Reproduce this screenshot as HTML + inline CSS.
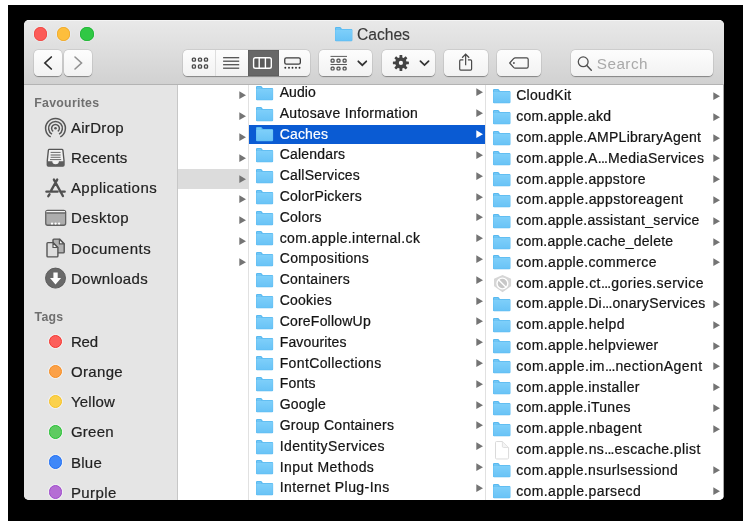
<!DOCTYPE html>
<html><head><meta charset="utf-8"><title>Caches</title>
<style>
html,body{margin:0;padding:0;background:#fff;}
body{width:750px;height:525px;position:relative;overflow:hidden;font-family:"Liberation Sans",sans-serif;font-size:14px;color:#1e1e1e;}
.bg{position:absolute;left:8px;top:5px;width:735px;height:516px;background:#000;}
.win{position:absolute;left:24px;top:20px;width:700px;height:480px;border-radius:5px;overflow:hidden;background:#fff;}
.pg{position:absolute;left:-24px;top:-20px;width:750px;height:525px;will-change:transform;}
.abs{position:absolute;}
.tb{position:absolute;left:24px;top:20px;width:700px;height:64px;background:linear-gradient(#e9e9e9,#d1d1d1);border-bottom:1px solid #b3b3b3;box-shadow:inset 0 1px 0 #f4f4f4;}
.tl{position:absolute;width:13.6px;height:13.6px;border-radius:50%;top:27px;}
.btn{position:absolute;top:49.7px;height:26px;background:linear-gradient(#fdfdfd,#f2f2f2);border-radius:4.5px;box-shadow:0 0.5px 1px rgba(0,0,0,.35),0 0 0 0.5px rgba(0,0,0,.08);}
.side{position:absolute;left:24px;top:85px;width:153px;height:415px;background:#e5e5e5;border-right:1px solid #c7c7c7;}
.sh{position:absolute;left:35px;font-size:12.3px;font-weight:bold;color:#6f6f6f;white-space:nowrap;line-height:14px;}
.si{position:absolute;left:70.9px;font-size:15px;color:#222;white-space:nowrap;line-height:18px;-webkit-text-stroke:0.2px #222;}
.dot{position:absolute;left:48.7px;width:11.8px;height:11.8px;border-radius:50%;border:1px solid;box-shadow:0 0 0 0.9px rgba(255,255,255,.5);}
.c0{position:absolute;left:178px;top:85px;width:70px;height:415px;background:#fff;border-right:1px solid #e1e1e1;}
.c1{position:absolute;left:249px;top:85px;width:236px;height:415px;background:#fff;border-right:1px solid #e1e1e1;}
.c2{position:absolute;left:486px;top:85px;width:237px;height:415px;background:#fff;border-right:1px solid #a9a9a9;}
.lbl{position:absolute;white-space:nowrap;font-size:14px;line-height:16px;color:#141414;-webkit-text-stroke:0.22px #141414;}
.fi,.ar,.ic{position:absolute;overflow:visible;}
</style></head><body>
<div class="bg"></div>
<div class="win"><div class="pg">
<div class="tb"></div>
<div class="tl" style="left:33.9px;background:#fc5b57;box-shadow:inset 0 0 0 0.8px #ee4a45,0 0 0 0.8px rgba(235,245,245,.7);"></div>
<div class="tl" style="left:56.8px;background:#fdbe3c;box-shadow:inset 0 0 0 0.8px #eea92e,0 0 0 0.8px rgba(235,240,248,.7);"></div>
<div class="tl" style="left:80.1px;background:#30c844;box-shadow:inset 0 0 0 0.8px #20b536,0 0 0 0.8px rgba(245,235,245,.7);"></div>
<div class="abs" style="left:356.9px;top:26px;font-size:15.65px;line-height:18px;color:#383838;white-space:nowrap;-webkit-text-stroke:0.15px #383838;">Caches</div>
<div class="btn" style="left:33.8px;width:28.4px;"></div>
<div class="btn" style="left:64px;width:28.4px;"></div>
<div class="btn" style="left:183.1px;width:126.7px;"></div>
<div class="abs" style="left:215px;top:49.7px;width:1px;height:26px;background:#dedede"></div>
<div class="abs" style="left:247.6px;top:49.7px;width:31px;height:26.3px;background:#676767;box-shadow:inset 0 0 0 0.5px #595959"></div>
<div class="btn" style="left:319.1px;width:53px;"></div>
<div class="btn" style="left:381.6px;width:53px;"></div>
<div class="btn" style="left:443.9px;width:43.7px;"></div>
<div class="btn" style="left:497.1px;width:43.9px;"></div>
<div class="btn" style="left:570.9px;width:142.6px;"></div>
<div class="abs" style="left:596.8px;top:55px;font-size:15.3px;line-height:18px;color:#a9a9a9;letter-spacing:0.45px;">Search</div>
<div class="side"></div>
<div class="c0"></div>
<div class="c1"></div>
<div class="c2"></div>

<svg class="ic" style="left:30.00px;top:46.00px" width="66" height="34" viewBox="0 0 66 34"><path d="M21.3 11.0 L14.9 17 L21.3 23.0" fill="none" stroke="#2d2d2d" stroke-width="1.7" stroke-linecap="round" stroke-linejoin="miter"/><path d="M45.0 11.0 L51.5 17 L45.0 23.0" fill="none" stroke="#919191" stroke-width="1.6" stroke-linecap="round" stroke-linejoin="miter"/></svg>
<svg class="ic" style="left:182.00px;top:46.00px" width="66" height="34" viewBox="0 0 66 34"><rect x="10.35" y="12.05" width="3.1" height="3.1" rx="0.9" fill="#ebebeb" stroke="#4a4a4a" stroke-width="1.3"/><rect x="10.35" y="18.95" width="3.1" height="3.1" rx="0.9" fill="#ebebeb" stroke="#4a4a4a" stroke-width="1.3"/><rect x="16.45" y="12.05" width="3.1" height="3.1" rx="0.9" fill="#ebebeb" stroke="#4a4a4a" stroke-width="1.3"/><rect x="16.45" y="18.95" width="3.1" height="3.1" rx="0.9" fill="#ebebeb" stroke="#4a4a4a" stroke-width="1.3"/><rect x="22.45" y="12.05" width="3.1" height="3.1" rx="0.9" fill="#ebebeb" stroke="#4a4a4a" stroke-width="1.3"/><rect x="22.45" y="18.95" width="3.1" height="3.1" rx="0.9" fill="#ebebeb" stroke="#4a4a4a" stroke-width="1.3"/><path d="M41.10 11.70 H57.20" stroke="#4a4a4a" stroke-width="1.25"/><path d="M41.10 15.20 H57.20" stroke="#4a4a4a" stroke-width="1.25"/><path d="M41.10 18.70 H57.20" stroke="#4a4a4a" stroke-width="1.25"/><path d="M41.10 22.20 H57.20" stroke="#4a4a4a" stroke-width="1.25"/></svg>
<svg class="ic" style="left:246.00px;top:46.00px" width="66" height="34" viewBox="0 0 66 34"><rect x="7.60" y="11.70" width="17.70" height="10.50" rx="1.8" fill="#5a5a5a" stroke="#fff" stroke-width="1.4"/><path d="M13.20 11.50 V22.50" stroke="#fff" stroke-width="1.4"/><path d="M19.40 11.50 V22.50" stroke="#fff" stroke-width="1.4"/><rect x="38.75" y="11.95" width="15.60" height="6.10" rx="1.6" fill="#f3f3f3" stroke="#3c3c3c" stroke-width="1.3"/><circle cx="39.30" cy="21.70" r="0.95" fill="#2e2e2e"/><circle cx="43.00" cy="21.70" r="0.95" fill="#2e2e2e"/><circle cx="46.50" cy="21.70" r="0.95" fill="#2e2e2e"/><circle cx="50.00" cy="21.70" r="0.95" fill="#2e2e2e"/><circle cx="53.50" cy="21.70" r="0.95" fill="#2e2e2e"/></svg>
<svg class="ic" style="left:316.00px;top:46.00px" width="66" height="34" viewBox="0 0 66 34"><path d="M14.50 10.40 H31.00" stroke="#4a4a4a" stroke-width="0.9"/><path d="M14.50 18.50 H31.00" stroke="#4a4a4a" stroke-width="0.9"/><rect x="15.10" y="13.20" width="3.0" height="2.9" rx="0.9" fill="#ebebeb" stroke="#4a4a4a" stroke-width="1.2"/><rect x="15.10" y="21.10" width="3.0" height="2.9" rx="0.9" fill="#ebebeb" stroke="#4a4a4a" stroke-width="1.2"/><rect x="21.00" y="13.20" width="3.0" height="2.9" rx="0.9" fill="#ebebeb" stroke="#4a4a4a" stroke-width="1.2"/><rect x="21.00" y="21.10" width="3.0" height="2.9" rx="0.9" fill="#ebebeb" stroke="#4a4a4a" stroke-width="1.2"/><rect x="27.10" y="13.20" width="3.0" height="2.9" rx="0.9" fill="#ebebeb" stroke="#4a4a4a" stroke-width="1.2"/><rect x="27.10" y="21.10" width="3.0" height="2.9" rx="0.9" fill="#ebebeb" stroke="#4a4a4a" stroke-width="1.2"/><path d="M42.30 15.30 L46.30 19.20 L50.30 15.30" fill="none" stroke="#333" stroke-width="1.75" stroke-linecap="round" stroke-linejoin="miter"/></svg>
<svg class="ic" style="left:380.00px;top:46.00px" width="66" height="34" viewBox="0 0 66 34"><rect x="19.50" y="8.90" width="2.8" height="4" rx="0.5" fill="#434343" transform="rotate(0 20.90 16.90)"/><rect x="19.50" y="8.90" width="2.8" height="4" rx="0.5" fill="#434343" transform="rotate(45 20.90 16.90)"/><rect x="19.50" y="8.90" width="2.8" height="4" rx="0.5" fill="#434343" transform="rotate(90 20.90 16.90)"/><rect x="19.50" y="8.90" width="2.8" height="4" rx="0.5" fill="#434343" transform="rotate(135 20.90 16.90)"/><rect x="19.50" y="8.90" width="2.8" height="4" rx="0.5" fill="#434343" transform="rotate(180 20.90 16.90)"/><rect x="19.50" y="8.90" width="2.8" height="4" rx="0.5" fill="#434343" transform="rotate(225 20.90 16.90)"/><rect x="19.50" y="8.90" width="2.8" height="4" rx="0.5" fill="#434343" transform="rotate(270 20.90 16.90)"/><rect x="19.50" y="8.90" width="2.8" height="4" rx="0.5" fill="#434343" transform="rotate(315 20.90 16.90)"/><circle cx="20.90" cy="16.90" r="3.9" fill="none" stroke="#434343" stroke-width="3.6"/><path d="M40.40 15.20 L44.50 19.10 L48.60 15.20" fill="none" stroke="#333" stroke-width="1.75" stroke-linecap="round" stroke-linejoin="miter"/></svg>
<svg class="ic" style="left:440.00px;top:46.00px" width="106" height="34" viewBox="0 0 106 34"><path d="M23.40 13.90 H20.70 Q19.70 13.90 19.70 14.90 V23.10 Q19.70 24.10 20.70 24.10 H30.60 Q31.60 24.10 31.60 23.10 V14.90 Q31.60 13.90 30.60 13.90 H27.90" fill="none" stroke="#4a4a4a" stroke-width="1.2"/><path d="M25.65 19.20 V8.40 M22.10 11.70 L25.65 8.20 L29.20 11.70" fill="none" stroke="#4a4a4a" stroke-width="1.2" stroke-linejoin="miter"/><path d="M69.70 17.00 L73.60 12.60 Q74.30 11.90 75.30 11.90 H86.60 Q88.20 11.90 88.20 13.50 V20.50 Q88.20 22.10 86.60 22.10 H75.30 Q74.30 22.10 73.60 21.40 Z" fill="none" stroke="#4a4a4a" stroke-width="1.2" stroke-linejoin="round"/><circle cx="73.90" cy="17.00" r="0.9" fill="#4a4a4a"/></svg>
<svg class="ic" style="left:570.00px;top:46.00px" width="30" height="34" viewBox="0 0 30 34"><circle cx="13.20" cy="15.80" r="4.9" fill="none" stroke="#515151" stroke-width="1.3"/><path d="M16.80 19.50 L21.30 24.20" stroke="#515151" stroke-width="1.5" stroke-linecap="round"/></svg>
<svg class="fi" style="left:334.80px;top:27.00px" width="17.4" height="14.4" viewBox="0 0 17.4 14.4"><g transform="scale(1.0 0.988)"><defs><linearGradient id="gt" x1="0" y1="0" x2="0" y2="1"><stop offset="0" stop-color="#7ecffa"/><stop offset="1" stop-color="#69c3f6"/></linearGradient></defs><path d="M0 1.1 Q0 0 1.1 0 L5 0 Q5.6 0 6.1 0.7 L6.9 2 L16.3 2 Q17.4 2 17.4 3.1 L17.4 13.3 Q17.4 14.4 16.3 14.4 L1.1 14.4 Q0 14.4 0 13.3 Z" fill="#58b9f0"/><path d="M0.35 3.6 Q0.35 2.9 1.1 2.9 L16.3 2.9 Q17.05 2.9 17.05 3.6 L17.05 13.2 Q17.05 13.9 16.3 13.9 L1.1 13.9 Q0.35 13.9 0.35 13.2 Z" fill="url(#gt)"/><rect x="0.8" y="1.5" width="4.6" height="0.9" rx="0.4" fill="#9adbfb" opacity="0.8"/></g></svg>
<div class="sh" style="top:95.6px;left:34.3px;letter-spacing:0.28px">Favourites</div>
<div class="sh" style="top:309.6px;left:34.6px;letter-spacing:0.2px">Tags</div>
<div class="si" style="top:119px;letter-spacing:0.323px">AirDrop</div>
<div class="si" style="top:149px;letter-spacing:0.228px">Recents</div>
<div class="si" style="top:179px;letter-spacing:0.446px">Applications</div>
<div class="si" style="top:209px;letter-spacing:0.461px">Desktop</div>
<div class="si" style="top:240px;letter-spacing:0.491px">Documents</div>
<div class="si" style="top:270px;letter-spacing:0.323px">Downloads</div>
<div class="si" style="top:333px;letter-spacing:-0.166px">Red</div>
<div class="dot" style="top:334.50px;background:#fc5f5b;border-color:#f4332e"></div>
<div class="si" style="top:363px;letter-spacing:0.351px">Orange</div>
<div class="dot" style="top:364.58px;background:#fba149;border-color:#f68c20"></div>
<div class="si" style="top:393px;letter-spacing:0.237px">Yellow</div>
<div class="dot" style="top:394.66px;background:#fbd14c;border-color:#f6c122"></div>
<div class="si" style="top:423px;letter-spacing:0.274px">Green</div>
<div class="dot" style="top:424.74px;background:#5ecb61;border-color:#22c030"></div>
<div class="si" style="top:454px;letter-spacing:0.323px">Blue</div>
<div class="dot" style="top:454.82px;background:#4088f8;border-color:#1c6df5"></div>
<div class="si" style="top:484px;letter-spacing:0.408px">Purple</div>
<div class="dot" style="top:484.90px;background:#b56dd4;border-color:#9d47cb"></div>
<svg class="ic" style="left:40.00px;top:112.00px" width="32" height="30" viewBox="0 0 32 30"><path d="M10.70 24.96 A9.9 9.9 0 1 1 20.30 24.96" fill="none" stroke="#555" stroke-width="1.5"/><path d="M11.95 22.21 A6.9 6.9 0 1 1 19.05 22.21" fill="none" stroke="#555" stroke-width="1.5"/><path d="M13.21 19.46 A3.9 3.9 0 1 1 17.79 19.46" fill="none" stroke="#555" stroke-width="1.5"/><circle cx="15.5" cy="16.30000000000001" r="1.3" fill="#555"/></svg>
<svg class="ic" style="left:40.00px;top:143.00px" width="32" height="30" viewBox="0 0 32 30"><path d="M9.30 6.30 H21.90 Q22.70 6.30 22.90 7.10 L24.00 17.50 V22.00 Q24.00 23.10 22.90 23.10 H8.40 Q7.30 23.10 7.30 22.00 V17.50 L8.40 7.10 Q8.60 6.30 9.30 6.30 Z" fill="#f2f2f2" stroke="#555" stroke-width="1.35" stroke-linejoin="round"/><path d="M7.30 18.30 H12.30 A3.3 3.0 0 0 0 18.90 18.30 H24.00 V22.20 Q24.00 23.10 23.00 23.10 H8.30 Q7.30 23.10 7.30 22.20 Z" fill="#5e5e5e"/><path d="M10.60 9.40 H20.60" stroke="#6a6a6a" stroke-width="1.0"/><path d="M10.60 12.00 H20.60" stroke="#8a8a8a" stroke-width="1.5"/><path d="M10.60 14.30 H20.60" stroke="#6a6a6a" stroke-width="1.0"/><path d="M10.00 16.60 H21.20" stroke="#6a6a6a" stroke-width="1.0"/></svg>
<svg class="ic" style="left:40.00px;top:173.00px" width="32" height="30" viewBox="0 0 32 30"><path d="M6.40 18.60 H17.60 M20.20 18.60 H24.70 M17.20 6.60 L11.20 17.40 M9.50 21.30 L8.30 23.20 M13.90 6.60 L22.90 23.00" fill="none" stroke="#505050" stroke-width="2.35" stroke-linecap="round"/></svg>
<svg class="ic" style="left:40.00px;top:203.00px" width="32" height="30" viewBox="0 0 32 30"><rect x="5.75" y="7.35" width="19.90" height="14.90" rx="2" fill="#adadad" stroke="#616161" stroke-width="1.3"/><rect x="6.40" y="8.00" width="18.6" height="1.2" fill="#f4f4f4"/><rect x="6.40" y="9.20" width="18.6" height="1.7" fill="#777"/><circle cx="12.00" cy="20.60" r="1.15" fill="#fff"/><circle cx="15.60" cy="20.60" r="1.15" fill="#fff"/><circle cx="19.10" cy="20.60" r="1.15" fill="#fff"/></svg>
<svg class="ic" style="left:40.00px;top:233.00px" width="32" height="30" viewBox="0 0 32 30"><path d="M13.00 7.00 Q13.00 6.10 13.90 6.10 H19.60 L24.20 10.70 V19.00 Q24.20 19.90 23.30 19.90 H13.00 Z" fill="#b2b2b2" stroke="#555" stroke-width="1.4" stroke-linejoin="round"/><path d="M19.40 6.40 V10.90 H23.90 Z" fill="#f6f6f6" stroke="#555" stroke-width="1.2" stroke-linejoin="round"/><path d="M7.00 10.50 Q7.00 9.60 7.90 9.60 H13.10 L17.90 14.40 V23.00 Q17.90 23.90 17.00 23.90 H7.90 Q7.00 23.90 7.00 23.00 Z" fill="#dedede" stroke="#555" stroke-width="1.4" stroke-linejoin="round"/><path d="M13.00 9.90 V14.50 H17.60 Z" fill="#f8f8f8" stroke="#555" stroke-width="1.2" stroke-linejoin="round"/></svg>
<svg class="ic" style="left:40.00px;top:263.00px" width="32" height="30" viewBox="0 0 32 30"><circle cx="15.5" cy="15.10" r="10.0" fill="#696969" stroke="#555" stroke-width="0.9"/><path d="M13.40 9.40 H17.70 V15.00 H21.10 L15.50 21.60 L10.00 15.00 H13.40 Z" fill="#fff"/></svg>
<svg class="ar" style="left:239.20px;top:91.30px" width="8" height="8.4" viewBox="0 0 8 8.4"><path d="M0.3 0.3 L7.0 4.2 L0.3 8.1 Z" fill="#747474"/></svg>
<svg class="ar" style="left:239.20px;top:112.13px" width="8" height="8.4" viewBox="0 0 8 8.4"><path d="M0.3 0.3 L7.0 4.2 L0.3 8.1 Z" fill="#747474"/></svg>
<svg class="ar" style="left:239.20px;top:132.96px" width="8" height="8.4" viewBox="0 0 8 8.4"><path d="M0.3 0.3 L7.0 4.2 L0.3 8.1 Z" fill="#747474"/></svg>
<svg class="ar" style="left:239.20px;top:153.79px" width="8" height="8.4" viewBox="0 0 8 8.4"><path d="M0.3 0.3 L7.0 4.2 L0.3 8.1 Z" fill="#747474"/></svg>
<div class="abs" style="left:178px;top:169.42px;width:70.5px;height:19.2px;background:#dcdcdc"></div>
<svg class="ar" style="left:239.20px;top:174.62px" width="8" height="8.4" viewBox="0 0 8 8.4"><path d="M0.3 0.3 L7.0 4.2 L0.3 8.1 Z" fill="#747474"/></svg>
<svg class="ar" style="left:239.20px;top:195.45px" width="8" height="8.4" viewBox="0 0 8 8.4"><path d="M0.3 0.3 L7.0 4.2 L0.3 8.1 Z" fill="#747474"/></svg>
<svg class="ar" style="left:239.20px;top:216.28px" width="8" height="8.4" viewBox="0 0 8 8.4"><path d="M0.3 0.3 L7.0 4.2 L0.3 8.1 Z" fill="#747474"/></svg>
<svg class="ar" style="left:239.20px;top:237.11px" width="8" height="8.4" viewBox="0 0 8 8.4"><path d="M0.3 0.3 L7.0 4.2 L0.3 8.1 Z" fill="#747474"/></svg>
<svg class="ar" style="left:239.20px;top:257.94px" width="8" height="8.4" viewBox="0 0 8 8.4"><path d="M0.3 0.3 L7.0 4.2 L0.3 8.1 Z" fill="#747474"/></svg>
<svg class="fi" style="left:256.45px;top:85.76px" width="17.4" height="14.4" viewBox="0 0 17.4 14.4"><g transform="scale(0.985 0.988)"><defs><linearGradient id="ga0" x1="0" y1="0" x2="0" y2="1"><stop offset="0" stop-color="#7ecffa"/><stop offset="1" stop-color="#69c3f6"/></linearGradient></defs><path d="M0 1.1 Q0 0 1.1 0 L5 0 Q5.6 0 6.1 0.7 L6.9 2 L16.3 2 Q17.4 2 17.4 3.1 L17.4 13.3 Q17.4 14.4 16.3 14.4 L1.1 14.4 Q0 14.4 0 13.3 Z" fill="#58b9f0"/><path d="M0.35 3.6 Q0.35 2.9 1.1 2.9 L16.3 2.9 Q17.05 2.9 17.05 3.6 L17.05 13.2 Q17.05 13.9 16.3 13.9 L1.1 13.9 Q0.35 13.9 0.35 13.2 Z" fill="url(#ga0)"/><rect x="0.8" y="1.5" width="4.6" height="0.9" rx="0.4" fill="#9adbfb" opacity="0.8"/></g></svg>
<div class="lbl" style="left:279.7px;top:84px;letter-spacing:0.072px;">Audio</div>
<svg class="ar" style="left:476.00px;top:88.46px" width="8" height="8.4" viewBox="0 0 8 8.4"><path d="M0.3 0.3 L7.0 4.2 L0.3 8.1 Z" fill="#747474"/></svg>
<svg class="fi" style="left:256.45px;top:106.57px" width="17.4" height="14.4" viewBox="0 0 17.4 14.4"><g transform="scale(0.985 0.988)"><defs><linearGradient id="ga1" x1="0" y1="0" x2="0" y2="1"><stop offset="0" stop-color="#7ecffa"/><stop offset="1" stop-color="#69c3f6"/></linearGradient></defs><path d="M0 1.1 Q0 0 1.1 0 L5 0 Q5.6 0 6.1 0.7 L6.9 2 L16.3 2 Q17.4 2 17.4 3.1 L17.4 13.3 Q17.4 14.4 16.3 14.4 L1.1 14.4 Q0 14.4 0 13.3 Z" fill="#58b9f0"/><path d="M0.35 3.6 Q0.35 2.9 1.1 2.9 L16.3 2.9 Q17.05 2.9 17.05 3.6 L17.05 13.2 Q17.05 13.9 16.3 13.9 L1.1 13.9 Q0.35 13.9 0.35 13.2 Z" fill="url(#ga1)"/><rect x="0.8" y="1.5" width="4.6" height="0.9" rx="0.4" fill="#9adbfb" opacity="0.8"/></g></svg>
<div class="lbl" style="left:279.7px;top:105px;letter-spacing:0.305px;">Autosave Information</div>
<svg class="ar" style="left:476.00px;top:109.27px" width="8" height="8.4" viewBox="0 0 8 8.4"><path d="M0.3 0.3 L7.0 4.2 L0.3 8.1 Z" fill="#747474"/></svg>
<div class="abs" style="left:249px;top:124.8px;width:236px;height:19.2px;background:#0a5bd3"></div>
<svg class="fi" style="left:256.45px;top:127.39px" width="17.4" height="14.4" viewBox="0 0 17.4 14.4"><g transform="scale(0.985 0.988)"><defs><linearGradient id="ga2" x1="0" y1="0" x2="0" y2="1"><stop offset="0" stop-color="#7ecffa"/><stop offset="1" stop-color="#69c3f6"/></linearGradient></defs><path d="M0 1.1 Q0 0 1.1 0 L5 0 Q5.6 0 6.1 0.7 L6.9 2 L16.3 2 Q17.4 2 17.4 3.1 L17.4 13.3 Q17.4 14.4 16.3 14.4 L1.1 14.4 Q0 14.4 0 13.3 Z" fill="#58b9f0"/><path d="M0.35 3.6 Q0.35 2.9 1.1 2.9 L16.3 2.9 Q17.05 2.9 17.05 3.6 L17.05 13.2 Q17.05 13.9 16.3 13.9 L1.1 13.9 Q0.35 13.9 0.35 13.2 Z" fill="url(#ga2)"/><rect x="0.8" y="1.5" width="4.6" height="0.9" rx="0.4" fill="#9adbfb" opacity="0.8"/></g></svg>
<div class="lbl" style="left:279.7px;top:126px;letter-spacing:0.166px;color:#fff;-webkit-text-stroke:0.2px #fff;">Caches</div>
<svg class="ar" style="left:476.00px;top:130.09px" width="8" height="8.4" viewBox="0 0 8 8.4"><path d="M0.3 0.3 L7.0 4.2 L0.3 8.1 Z" fill="#fff"/></svg>
<svg class="fi" style="left:256.45px;top:148.20px" width="17.4" height="14.4" viewBox="0 0 17.4 14.4"><g transform="scale(0.985 0.988)"><defs><linearGradient id="ga3" x1="0" y1="0" x2="0" y2="1"><stop offset="0" stop-color="#7ecffa"/><stop offset="1" stop-color="#69c3f6"/></linearGradient></defs><path d="M0 1.1 Q0 0 1.1 0 L5 0 Q5.6 0 6.1 0.7 L6.9 2 L16.3 2 Q17.4 2 17.4 3.1 L17.4 13.3 Q17.4 14.4 16.3 14.4 L1.1 14.4 Q0 14.4 0 13.3 Z" fill="#58b9f0"/><path d="M0.35 3.6 Q0.35 2.9 1.1 2.9 L16.3 2.9 Q17.05 2.9 17.05 3.6 L17.05 13.2 Q17.05 13.9 16.3 13.9 L1.1 13.9 Q0.35 13.9 0.35 13.2 Z" fill="url(#ga3)"/><rect x="0.8" y="1.5" width="4.6" height="0.9" rx="0.4" fill="#9adbfb" opacity="0.8"/></g></svg>
<div class="lbl" style="left:279.7px;top:146px;letter-spacing:0.184px;">Calendars</div>
<svg class="ar" style="left:476.00px;top:150.90px" width="8" height="8.4" viewBox="0 0 8 8.4"><path d="M0.3 0.3 L7.0 4.2 L0.3 8.1 Z" fill="#747474"/></svg>
<svg class="fi" style="left:256.45px;top:169.01px" width="17.4" height="14.4" viewBox="0 0 17.4 14.4"><g transform="scale(0.985 0.988)"><defs><linearGradient id="ga4" x1="0" y1="0" x2="0" y2="1"><stop offset="0" stop-color="#7ecffa"/><stop offset="1" stop-color="#69c3f6"/></linearGradient></defs><path d="M0 1.1 Q0 0 1.1 0 L5 0 Q5.6 0 6.1 0.7 L6.9 2 L16.3 2 Q17.4 2 17.4 3.1 L17.4 13.3 Q17.4 14.4 16.3 14.4 L1.1 14.4 Q0 14.4 0 13.3 Z" fill="#58b9f0"/><path d="M0.35 3.6 Q0.35 2.9 1.1 2.9 L16.3 2.9 Q17.05 2.9 17.05 3.6 L17.05 13.2 Q17.05 13.9 16.3 13.9 L1.1 13.9 Q0.35 13.9 0.35 13.2 Z" fill="url(#ga4)"/><rect x="0.8" y="1.5" width="4.6" height="0.9" rx="0.4" fill="#9adbfb" opacity="0.8"/></g></svg>
<div class="lbl" style="left:279.7px;top:167px;letter-spacing:0.217px;">CallServices</div>
<svg class="ar" style="left:476.00px;top:171.71px" width="8" height="8.4" viewBox="0 0 8 8.4"><path d="M0.3 0.3 L7.0 4.2 L0.3 8.1 Z" fill="#747474"/></svg>
<svg class="fi" style="left:256.45px;top:189.82px" width="17.4" height="14.4" viewBox="0 0 17.4 14.4"><g transform="scale(0.985 0.988)"><defs><linearGradient id="ga5" x1="0" y1="0" x2="0" y2="1"><stop offset="0" stop-color="#7ecffa"/><stop offset="1" stop-color="#69c3f6"/></linearGradient></defs><path d="M0 1.1 Q0 0 1.1 0 L5 0 Q5.6 0 6.1 0.7 L6.9 2 L16.3 2 Q17.4 2 17.4 3.1 L17.4 13.3 Q17.4 14.4 16.3 14.4 L1.1 14.4 Q0 14.4 0 13.3 Z" fill="#58b9f0"/><path d="M0.35 3.6 Q0.35 2.9 1.1 2.9 L16.3 2.9 Q17.05 2.9 17.05 3.6 L17.05 13.2 Q17.05 13.9 16.3 13.9 L1.1 13.9 Q0.35 13.9 0.35 13.2 Z" fill="url(#ga5)"/><rect x="0.8" y="1.5" width="4.6" height="0.9" rx="0.4" fill="#9adbfb" opacity="0.8"/></g></svg>
<div class="lbl" style="left:279.7px;top:188px;letter-spacing:0.249px;">ColorPickers</div>
<svg class="ar" style="left:476.00px;top:192.52px" width="8" height="8.4" viewBox="0 0 8 8.4"><path d="M0.3 0.3 L7.0 4.2 L0.3 8.1 Z" fill="#747474"/></svg>
<svg class="fi" style="left:256.45px;top:210.64px" width="17.4" height="14.4" viewBox="0 0 17.4 14.4"><g transform="scale(0.985 0.988)"><defs><linearGradient id="ga6" x1="0" y1="0" x2="0" y2="1"><stop offset="0" stop-color="#7ecffa"/><stop offset="1" stop-color="#69c3f6"/></linearGradient></defs><path d="M0 1.1 Q0 0 1.1 0 L5 0 Q5.6 0 6.1 0.7 L6.9 2 L16.3 2 Q17.4 2 17.4 3.1 L17.4 13.3 Q17.4 14.4 16.3 14.4 L1.1 14.4 Q0 14.4 0 13.3 Z" fill="#58b9f0"/><path d="M0.35 3.6 Q0.35 2.9 1.1 2.9 L16.3 2.9 Q17.05 2.9 17.05 3.6 L17.05 13.2 Q17.05 13.9 16.3 13.9 L1.1 13.9 Q0.35 13.9 0.35 13.2 Z" fill="url(#ga6)"/><rect x="0.8" y="1.5" width="4.6" height="0.9" rx="0.4" fill="#9adbfb" opacity="0.8"/></g></svg>
<div class="lbl" style="left:279.7px;top:209px;letter-spacing:0.266px;">Colors</div>
<svg class="ar" style="left:476.00px;top:213.34px" width="8" height="8.4" viewBox="0 0 8 8.4"><path d="M0.3 0.3 L7.0 4.2 L0.3 8.1 Z" fill="#747474"/></svg>
<svg class="fi" style="left:256.45px;top:231.45px" width="17.4" height="14.4" viewBox="0 0 17.4 14.4"><g transform="scale(0.985 0.988)"><defs><linearGradient id="ga7" x1="0" y1="0" x2="0" y2="1"><stop offset="0" stop-color="#7ecffa"/><stop offset="1" stop-color="#69c3f6"/></linearGradient></defs><path d="M0 1.1 Q0 0 1.1 0 L5 0 Q5.6 0 6.1 0.7 L6.9 2 L16.3 2 Q17.4 2 17.4 3.1 L17.4 13.3 Q17.4 14.4 16.3 14.4 L1.1 14.4 Q0 14.4 0 13.3 Z" fill="#58b9f0"/><path d="M0.35 3.6 Q0.35 2.9 1.1 2.9 L16.3 2.9 Q17.05 2.9 17.05 3.6 L17.05 13.2 Q17.05 13.9 16.3 13.9 L1.1 13.9 Q0.35 13.9 0.35 13.2 Z" fill="url(#ga7)"/><rect x="0.8" y="1.5" width="4.6" height="0.9" rx="0.4" fill="#9adbfb" opacity="0.8"/></g></svg>
<div class="lbl" style="left:279.7px;top:230px;letter-spacing:0.395px;">com.apple.internal.ck</div>
<svg class="ar" style="left:476.00px;top:234.15px" width="8" height="8.4" viewBox="0 0 8 8.4"><path d="M0.3 0.3 L7.0 4.2 L0.3 8.1 Z" fill="#747474"/></svg>
<svg class="fi" style="left:256.45px;top:252.26px" width="17.4" height="14.4" viewBox="0 0 17.4 14.4"><g transform="scale(0.985 0.988)"><defs><linearGradient id="ga8" x1="0" y1="0" x2="0" y2="1"><stop offset="0" stop-color="#7ecffa"/><stop offset="1" stop-color="#69c3f6"/></linearGradient></defs><path d="M0 1.1 Q0 0 1.1 0 L5 0 Q5.6 0 6.1 0.7 L6.9 2 L16.3 2 Q17.4 2 17.4 3.1 L17.4 13.3 Q17.4 14.4 16.3 14.4 L1.1 14.4 Q0 14.4 0 13.3 Z" fill="#58b9f0"/><path d="M0.35 3.6 Q0.35 2.9 1.1 2.9 L16.3 2.9 Q17.05 2.9 17.05 3.6 L17.05 13.2 Q17.05 13.9 16.3 13.9 L1.1 13.9 Q0.35 13.9 0.35 13.2 Z" fill="url(#ga8)"/><rect x="0.8" y="1.5" width="4.6" height="0.9" rx="0.4" fill="#9adbfb" opacity="0.8"/></g></svg>
<div class="lbl" style="left:279.7px;top:250px;letter-spacing:0.388px;">Compositions</div>
<svg class="ar" style="left:476.00px;top:254.96px" width="8" height="8.4" viewBox="0 0 8 8.4"><path d="M0.3 0.3 L7.0 4.2 L0.3 8.1 Z" fill="#747474"/></svg>
<svg class="fi" style="left:256.45px;top:273.08px" width="17.4" height="14.4" viewBox="0 0 17.4 14.4"><g transform="scale(0.985 0.988)"><defs><linearGradient id="ga9" x1="0" y1="0" x2="0" y2="1"><stop offset="0" stop-color="#7ecffa"/><stop offset="1" stop-color="#69c3f6"/></linearGradient></defs><path d="M0 1.1 Q0 0 1.1 0 L5 0 Q5.6 0 6.1 0.7 L6.9 2 L16.3 2 Q17.4 2 17.4 3.1 L17.4 13.3 Q17.4 14.4 16.3 14.4 L1.1 14.4 Q0 14.4 0 13.3 Z" fill="#58b9f0"/><path d="M0.35 3.6 Q0.35 2.9 1.1 2.9 L16.3 2.9 Q17.05 2.9 17.05 3.6 L17.05 13.2 Q17.05 13.9 16.3 13.9 L1.1 13.9 Q0.35 13.9 0.35 13.2 Z" fill="url(#ga9)"/><rect x="0.8" y="1.5" width="4.6" height="0.9" rx="0.4" fill="#9adbfb" opacity="0.8"/></g></svg>
<div class="lbl" style="left:279.7px;top:271px;letter-spacing:0.266px;">Containers</div>
<svg class="ar" style="left:476.00px;top:275.78px" width="8" height="8.4" viewBox="0 0 8 8.4"><path d="M0.3 0.3 L7.0 4.2 L0.3 8.1 Z" fill="#747474"/></svg>
<svg class="fi" style="left:256.45px;top:293.89px" width="17.4" height="14.4" viewBox="0 0 17.4 14.4"><g transform="scale(0.985 0.988)"><defs><linearGradient id="ga10" x1="0" y1="0" x2="0" y2="1"><stop offset="0" stop-color="#7ecffa"/><stop offset="1" stop-color="#69c3f6"/></linearGradient></defs><path d="M0 1.1 Q0 0 1.1 0 L5 0 Q5.6 0 6.1 0.7 L6.9 2 L16.3 2 Q17.4 2 17.4 3.1 L17.4 13.3 Q17.4 14.4 16.3 14.4 L1.1 14.4 Q0 14.4 0 13.3 Z" fill="#58b9f0"/><path d="M0.35 3.6 Q0.35 2.9 1.1 2.9 L16.3 2.9 Q17.05 2.9 17.05 3.6 L17.05 13.2 Q17.05 13.9 16.3 13.9 L1.1 13.9 Q0.35 13.9 0.35 13.2 Z" fill="url(#ga10)"/><rect x="0.8" y="1.5" width="4.6" height="0.9" rx="0.4" fill="#9adbfb" opacity="0.8"/></g></svg>
<div class="lbl" style="left:279.7px;top:292px;letter-spacing:0.251px;">Cookies</div>
<svg class="ar" style="left:476.00px;top:296.59px" width="8" height="8.4" viewBox="0 0 8 8.4"><path d="M0.3 0.3 L7.0 4.2 L0.3 8.1 Z" fill="#747474"/></svg>
<svg class="fi" style="left:256.45px;top:314.70px" width="17.4" height="14.4" viewBox="0 0 17.4 14.4"><g transform="scale(0.985 0.988)"><defs><linearGradient id="ga11" x1="0" y1="0" x2="0" y2="1"><stop offset="0" stop-color="#7ecffa"/><stop offset="1" stop-color="#69c3f6"/></linearGradient></defs><path d="M0 1.1 Q0 0 1.1 0 L5 0 Q5.6 0 6.1 0.7 L6.9 2 L16.3 2 Q17.4 2 17.4 3.1 L17.4 13.3 Q17.4 14.4 16.3 14.4 L1.1 14.4 Q0 14.4 0 13.3 Z" fill="#58b9f0"/><path d="M0.35 3.6 Q0.35 2.9 1.1 2.9 L16.3 2.9 Q17.05 2.9 17.05 3.6 L17.05 13.2 Q17.05 13.9 16.3 13.9 L1.1 13.9 Q0.35 13.9 0.35 13.2 Z" fill="url(#ga11)"/><rect x="0.8" y="1.5" width="4.6" height="0.9" rx="0.4" fill="#9adbfb" opacity="0.8"/></g></svg>
<div class="lbl" style="left:279.7px;top:313px;letter-spacing:0.209px;">CoreFollowUp</div>
<svg class="ar" style="left:476.00px;top:317.40px" width="8" height="8.4" viewBox="0 0 8 8.4"><path d="M0.3 0.3 L7.0 4.2 L0.3 8.1 Z" fill="#747474"/></svg>
<svg class="fi" style="left:256.45px;top:335.52px" width="17.4" height="14.4" viewBox="0 0 17.4 14.4"><g transform="scale(0.985 0.988)"><defs><linearGradient id="ga12" x1="0" y1="0" x2="0" y2="1"><stop offset="0" stop-color="#7ecffa"/><stop offset="1" stop-color="#69c3f6"/></linearGradient></defs><path d="M0 1.1 Q0 0 1.1 0 L5 0 Q5.6 0 6.1 0.7 L6.9 2 L16.3 2 Q17.4 2 17.4 3.1 L17.4 13.3 Q17.4 14.4 16.3 14.4 L1.1 14.4 Q0 14.4 0 13.3 Z" fill="#58b9f0"/><path d="M0.35 3.6 Q0.35 2.9 1.1 2.9 L16.3 2.9 Q17.05 2.9 17.05 3.6 L17.05 13.2 Q17.05 13.9 16.3 13.9 L1.1 13.9 Q0.35 13.9 0.35 13.2 Z" fill="url(#ga12)"/><rect x="0.8" y="1.5" width="4.6" height="0.9" rx="0.4" fill="#9adbfb" opacity="0.8"/></g></svg>
<div class="lbl" style="left:279.7px;top:334px;letter-spacing:0.160px;">Favourites</div>
<svg class="ar" style="left:476.00px;top:338.22px" width="8" height="8.4" viewBox="0 0 8 8.4"><path d="M0.3 0.3 L7.0 4.2 L0.3 8.1 Z" fill="#747474"/></svg>
<svg class="fi" style="left:256.45px;top:356.33px" width="17.4" height="14.4" viewBox="0 0 17.4 14.4"><g transform="scale(0.985 0.988)"><defs><linearGradient id="ga13" x1="0" y1="0" x2="0" y2="1"><stop offset="0" stop-color="#7ecffa"/><stop offset="1" stop-color="#69c3f6"/></linearGradient></defs><path d="M0 1.1 Q0 0 1.1 0 L5 0 Q5.6 0 6.1 0.7 L6.9 2 L16.3 2 Q17.4 2 17.4 3.1 L17.4 13.3 Q17.4 14.4 16.3 14.4 L1.1 14.4 Q0 14.4 0 13.3 Z" fill="#58b9f0"/><path d="M0.35 3.6 Q0.35 2.9 1.1 2.9 L16.3 2.9 Q17.05 2.9 17.05 3.6 L17.05 13.2 Q17.05 13.9 16.3 13.9 L1.1 13.9 Q0.35 13.9 0.35 13.2 Z" fill="url(#ga13)"/><rect x="0.8" y="1.5" width="4.6" height="0.9" rx="0.4" fill="#9adbfb" opacity="0.8"/></g></svg>
<div class="lbl" style="left:279.7px;top:355px;letter-spacing:0.364px;">FontCollections</div>
<svg class="ar" style="left:476.00px;top:359.03px" width="8" height="8.4" viewBox="0 0 8 8.4"><path d="M0.3 0.3 L7.0 4.2 L0.3 8.1 Z" fill="#747474"/></svg>
<svg class="fi" style="left:256.45px;top:377.14px" width="17.4" height="14.4" viewBox="0 0 17.4 14.4"><g transform="scale(0.985 0.988)"><defs><linearGradient id="ga14" x1="0" y1="0" x2="0" y2="1"><stop offset="0" stop-color="#7ecffa"/><stop offset="1" stop-color="#69c3f6"/></linearGradient></defs><path d="M0 1.1 Q0 0 1.1 0 L5 0 Q5.6 0 6.1 0.7 L6.9 2 L16.3 2 Q17.4 2 17.4 3.1 L17.4 13.3 Q17.4 14.4 16.3 14.4 L1.1 14.4 Q0 14.4 0 13.3 Z" fill="#58b9f0"/><path d="M0.35 3.6 Q0.35 2.9 1.1 2.9 L16.3 2.9 Q17.05 2.9 17.05 3.6 L17.05 13.2 Q17.05 13.9 16.3 13.9 L1.1 13.9 Q0.35 13.9 0.35 13.2 Z" fill="url(#ga14)"/><rect x="0.8" y="1.5" width="4.6" height="0.9" rx="0.4" fill="#9adbfb" opacity="0.8"/></g></svg>
<div class="lbl" style="left:279.7px;top:375px;letter-spacing:0.196px;">Fonts</div>
<svg class="ar" style="left:476.00px;top:379.84px" width="8" height="8.4" viewBox="0 0 8 8.4"><path d="M0.3 0.3 L7.0 4.2 L0.3 8.1 Z" fill="#747474"/></svg>
<svg class="fi" style="left:256.45px;top:397.95px" width="17.4" height="14.4" viewBox="0 0 17.4 14.4"><g transform="scale(0.985 0.988)"><defs><linearGradient id="ga15" x1="0" y1="0" x2="0" y2="1"><stop offset="0" stop-color="#7ecffa"/><stop offset="1" stop-color="#69c3f6"/></linearGradient></defs><path d="M0 1.1 Q0 0 1.1 0 L5 0 Q5.6 0 6.1 0.7 L6.9 2 L16.3 2 Q17.4 2 17.4 3.1 L17.4 13.3 Q17.4 14.4 16.3 14.4 L1.1 14.4 Q0 14.4 0 13.3 Z" fill="#58b9f0"/><path d="M0.35 3.6 Q0.35 2.9 1.1 2.9 L16.3 2.9 Q17.05 2.9 17.05 3.6 L17.05 13.2 Q17.05 13.9 16.3 13.9 L1.1 13.9 Q0.35 13.9 0.35 13.2 Z" fill="url(#ga15)"/><rect x="0.8" y="1.5" width="4.6" height="0.9" rx="0.4" fill="#9adbfb" opacity="0.8"/></g></svg>
<div class="lbl" style="left:279.7px;top:396px;letter-spacing:0.189px;">Google</div>
<svg class="ar" style="left:476.00px;top:400.65px" width="8" height="8.4" viewBox="0 0 8 8.4"><path d="M0.3 0.3 L7.0 4.2 L0.3 8.1 Z" fill="#747474"/></svg>
<svg class="fi" style="left:256.45px;top:418.77px" width="17.4" height="14.4" viewBox="0 0 17.4 14.4"><g transform="scale(0.985 0.988)"><defs><linearGradient id="ga16" x1="0" y1="0" x2="0" y2="1"><stop offset="0" stop-color="#7ecffa"/><stop offset="1" stop-color="#69c3f6"/></linearGradient></defs><path d="M0 1.1 Q0 0 1.1 0 L5 0 Q5.6 0 6.1 0.7 L6.9 2 L16.3 2 Q17.4 2 17.4 3.1 L17.4 13.3 Q17.4 14.4 16.3 14.4 L1.1 14.4 Q0 14.4 0 13.3 Z" fill="#58b9f0"/><path d="M0.35 3.6 Q0.35 2.9 1.1 2.9 L16.3 2.9 Q17.05 2.9 17.05 3.6 L17.05 13.2 Q17.05 13.9 16.3 13.9 L1.1 13.9 Q0.35 13.9 0.35 13.2 Z" fill="url(#ga16)"/><rect x="0.8" y="1.5" width="4.6" height="0.9" rx="0.4" fill="#9adbfb" opacity="0.8"/></g></svg>
<div class="lbl" style="left:279.7px;top:417px;letter-spacing:0.252px;">Group Containers</div>
<svg class="ar" style="left:476.00px;top:421.47px" width="8" height="8.4" viewBox="0 0 8 8.4"><path d="M0.3 0.3 L7.0 4.2 L0.3 8.1 Z" fill="#747474"/></svg>
<svg class="fi" style="left:256.45px;top:439.58px" width="17.4" height="14.4" viewBox="0 0 17.4 14.4"><g transform="scale(0.985 0.988)"><defs><linearGradient id="ga17" x1="0" y1="0" x2="0" y2="1"><stop offset="0" stop-color="#7ecffa"/><stop offset="1" stop-color="#69c3f6"/></linearGradient></defs><path d="M0 1.1 Q0 0 1.1 0 L5 0 Q5.6 0 6.1 0.7 L6.9 2 L16.3 2 Q17.4 2 17.4 3.1 L17.4 13.3 Q17.4 14.4 16.3 14.4 L1.1 14.4 Q0 14.4 0 13.3 Z" fill="#58b9f0"/><path d="M0.35 3.6 Q0.35 2.9 1.1 2.9 L16.3 2.9 Q17.05 2.9 17.05 3.6 L17.05 13.2 Q17.05 13.9 16.3 13.9 L1.1 13.9 Q0.35 13.9 0.35 13.2 Z" fill="url(#ga17)"/><rect x="0.8" y="1.5" width="4.6" height="0.9" rx="0.4" fill="#9adbfb" opacity="0.8"/></g></svg>
<div class="lbl" style="left:279.7px;top:438px;letter-spacing:0.398px;">IdentityServices</div>
<svg class="ar" style="left:476.00px;top:442.28px" width="8" height="8.4" viewBox="0 0 8 8.4"><path d="M0.3 0.3 L7.0 4.2 L0.3 8.1 Z" fill="#747474"/></svg>
<svg class="fi" style="left:256.45px;top:460.39px" width="17.4" height="14.4" viewBox="0 0 17.4 14.4"><g transform="scale(0.985 0.988)"><defs><linearGradient id="ga18" x1="0" y1="0" x2="0" y2="1"><stop offset="0" stop-color="#7ecffa"/><stop offset="1" stop-color="#69c3f6"/></linearGradient></defs><path d="M0 1.1 Q0 0 1.1 0 L5 0 Q5.6 0 6.1 0.7 L6.9 2 L16.3 2 Q17.4 2 17.4 3.1 L17.4 13.3 Q17.4 14.4 16.3 14.4 L1.1 14.4 Q0 14.4 0 13.3 Z" fill="#58b9f0"/><path d="M0.35 3.6 Q0.35 2.9 1.1 2.9 L16.3 2.9 Q17.05 2.9 17.05 3.6 L17.05 13.2 Q17.05 13.9 16.3 13.9 L1.1 13.9 Q0.35 13.9 0.35 13.2 Z" fill="url(#ga18)"/><rect x="0.8" y="1.5" width="4.6" height="0.9" rx="0.4" fill="#9adbfb" opacity="0.8"/></g></svg>
<div class="lbl" style="left:279.7px;top:459px;letter-spacing:0.455px;">Input Methods</div>
<svg class="ar" style="left:476.00px;top:463.09px" width="8" height="8.4" viewBox="0 0 8 8.4"><path d="M0.3 0.3 L7.0 4.2 L0.3 8.1 Z" fill="#747474"/></svg>
<svg class="fi" style="left:256.45px;top:481.21px" width="17.4" height="14.4" viewBox="0 0 17.4 14.4"><g transform="scale(0.985 0.988)"><defs><linearGradient id="ga19" x1="0" y1="0" x2="0" y2="1"><stop offset="0" stop-color="#7ecffa"/><stop offset="1" stop-color="#69c3f6"/></linearGradient></defs><path d="M0 1.1 Q0 0 1.1 0 L5 0 Q5.6 0 6.1 0.7 L6.9 2 L16.3 2 Q17.4 2 17.4 3.1 L17.4 13.3 Q17.4 14.4 16.3 14.4 L1.1 14.4 Q0 14.4 0 13.3 Z" fill="#58b9f0"/><path d="M0.35 3.6 Q0.35 2.9 1.1 2.9 L16.3 2.9 Q17.05 2.9 17.05 3.6 L17.05 13.2 Q17.05 13.9 16.3 13.9 L1.1 13.9 Q0.35 13.9 0.35 13.2 Z" fill="url(#ga19)"/><rect x="0.8" y="1.5" width="4.6" height="0.9" rx="0.4" fill="#9adbfb" opacity="0.8"/></g></svg>
<div class="lbl" style="left:279.7px;top:479px;letter-spacing:0.423px;">Internet Plug-Ins</div>
<svg class="ar" style="left:476.00px;top:483.91px" width="8" height="8.4" viewBox="0 0 8 8.4"><path d="M0.3 0.3 L7.0 4.2 L0.3 8.1 Z" fill="#747474"/></svg>
<svg class="fi" style="left:493.15px;top:88.90px" width="17.4" height="14.4" viewBox="0 0 17.4 14.4"><g transform="scale(1.003 0.988)"><defs><linearGradient id="gb0" x1="0" y1="0" x2="0" y2="1"><stop offset="0" stop-color="#7ecffa"/><stop offset="1" stop-color="#69c3f6"/></linearGradient></defs><path d="M0 1.1 Q0 0 1.1 0 L5 0 Q5.6 0 6.1 0.7 L6.9 2 L16.3 2 Q17.4 2 17.4 3.1 L17.4 13.3 Q17.4 14.4 16.3 14.4 L1.1 14.4 Q0 14.4 0 13.3 Z" fill="#58b9f0"/><path d="M0.35 3.6 Q0.35 2.9 1.1 2.9 L16.3 2.9 Q17.05 2.9 17.05 3.6 L17.05 13.2 Q17.05 13.9 16.3 13.9 L1.1 13.9 Q0.35 13.9 0.35 13.2 Z" fill="url(#gb0)"/><rect x="0.8" y="1.5" width="4.6" height="0.9" rx="0.4" fill="#9adbfb" opacity="0.8"/></g></svg>
<div class="lbl" style="left:516.2px;top:87px;letter-spacing:0.297px;">CloudKit</div>
<svg class="ar" style="left:712.60px;top:91.90px" width="8" height="8.4" viewBox="0 0 8 8.4"><path d="M0.3 0.3 L7.0 4.2 L0.3 8.1 Z" fill="#747474"/></svg>
<svg class="fi" style="left:493.15px;top:109.71px" width="17.4" height="14.4" viewBox="0 0 17.4 14.4"><g transform="scale(1.003 0.988)"><defs><linearGradient id="gb1" x1="0" y1="0" x2="0" y2="1"><stop offset="0" stop-color="#7ecffa"/><stop offset="1" stop-color="#69c3f6"/></linearGradient></defs><path d="M0 1.1 Q0 0 1.1 0 L5 0 Q5.6 0 6.1 0.7 L6.9 2 L16.3 2 Q17.4 2 17.4 3.1 L17.4 13.3 Q17.4 14.4 16.3 14.4 L1.1 14.4 Q0 14.4 0 13.3 Z" fill="#58b9f0"/><path d="M0.35 3.6 Q0.35 2.9 1.1 2.9 L16.3 2.9 Q17.05 2.9 17.05 3.6 L17.05 13.2 Q17.05 13.9 16.3 13.9 L1.1 13.9 Q0.35 13.9 0.35 13.2 Z" fill="url(#gb1)"/><rect x="0.8" y="1.5" width="4.6" height="0.9" rx="0.4" fill="#9adbfb" opacity="0.8"/></g></svg>
<div class="lbl" style="left:516.2px;top:108px;letter-spacing:0.311px;">com.apple.akd</div>
<svg class="ar" style="left:712.60px;top:112.71px" width="8" height="8.4" viewBox="0 0 8 8.4"><path d="M0.3 0.3 L7.0 4.2 L0.3 8.1 Z" fill="#747474"/></svg>
<svg class="fi" style="left:493.15px;top:130.51px" width="17.4" height="14.4" viewBox="0 0 17.4 14.4"><g transform="scale(1.003 0.988)"><defs><linearGradient id="gb2" x1="0" y1="0" x2="0" y2="1"><stop offset="0" stop-color="#7ecffa"/><stop offset="1" stop-color="#69c3f6"/></linearGradient></defs><path d="M0 1.1 Q0 0 1.1 0 L5 0 Q5.6 0 6.1 0.7 L6.9 2 L16.3 2 Q17.4 2 17.4 3.1 L17.4 13.3 Q17.4 14.4 16.3 14.4 L1.1 14.4 Q0 14.4 0 13.3 Z" fill="#58b9f0"/><path d="M0.35 3.6 Q0.35 2.9 1.1 2.9 L16.3 2.9 Q17.05 2.9 17.05 3.6 L17.05 13.2 Q17.05 13.9 16.3 13.9 L1.1 13.9 Q0.35 13.9 0.35 13.2 Z" fill="url(#gb2)"/><rect x="0.8" y="1.5" width="4.6" height="0.9" rx="0.4" fill="#9adbfb" opacity="0.8"/></g></svg>
<div class="lbl" style="left:516.2px;top:129px;letter-spacing:0.275px;">com.apple.AMPLibraryAgent</div>
<svg class="ar" style="left:712.60px;top:133.51px" width="8" height="8.4" viewBox="0 0 8 8.4"><path d="M0.3 0.3 L7.0 4.2 L0.3 8.1 Z" fill="#747474"/></svg>
<svg class="fi" style="left:493.15px;top:151.31px" width="17.4" height="14.4" viewBox="0 0 17.4 14.4"><g transform="scale(1.003 0.988)"><defs><linearGradient id="gb3" x1="0" y1="0" x2="0" y2="1"><stop offset="0" stop-color="#7ecffa"/><stop offset="1" stop-color="#69c3f6"/></linearGradient></defs><path d="M0 1.1 Q0 0 1.1 0 L5 0 Q5.6 0 6.1 0.7 L6.9 2 L16.3 2 Q17.4 2 17.4 3.1 L17.4 13.3 Q17.4 14.4 16.3 14.4 L1.1 14.4 Q0 14.4 0 13.3 Z" fill="#58b9f0"/><path d="M0.35 3.6 Q0.35 2.9 1.1 2.9 L16.3 2.9 Q17.05 2.9 17.05 3.6 L17.05 13.2 Q17.05 13.9 16.3 13.9 L1.1 13.9 Q0.35 13.9 0.35 13.2 Z" fill="url(#gb3)"/><rect x="0.8" y="1.5" width="4.6" height="0.9" rx="0.4" fill="#9adbfb" opacity="0.8"/></g></svg>
<div class="lbl" style="left:516.2px;top:150px;letter-spacing:0.338px;">com.apple.A<span style="letter-spacing:-0.7px;margin-right:0.8px">...</span>MediaServices</div>
<svg class="ar" style="left:712.60px;top:154.31px" width="8" height="8.4" viewBox="0 0 8 8.4"><path d="M0.3 0.3 L7.0 4.2 L0.3 8.1 Z" fill="#747474"/></svg>
<svg class="fi" style="left:493.15px;top:172.12px" width="17.4" height="14.4" viewBox="0 0 17.4 14.4"><g transform="scale(1.003 0.988)"><defs><linearGradient id="gb4" x1="0" y1="0" x2="0" y2="1"><stop offset="0" stop-color="#7ecffa"/><stop offset="1" stop-color="#69c3f6"/></linearGradient></defs><path d="M0 1.1 Q0 0 1.1 0 L5 0 Q5.6 0 6.1 0.7 L6.9 2 L16.3 2 Q17.4 2 17.4 3.1 L17.4 13.3 Q17.4 14.4 16.3 14.4 L1.1 14.4 Q0 14.4 0 13.3 Z" fill="#58b9f0"/><path d="M0.35 3.6 Q0.35 2.9 1.1 2.9 L16.3 2.9 Q17.05 2.9 17.05 3.6 L17.05 13.2 Q17.05 13.9 16.3 13.9 L1.1 13.9 Q0.35 13.9 0.35 13.2 Z" fill="url(#gb4)"/><rect x="0.8" y="1.5" width="4.6" height="0.9" rx="0.4" fill="#9adbfb" opacity="0.8"/></g></svg>
<div class="lbl" style="left:516.2px;top:171px;letter-spacing:0.372px;">com.apple.appstore</div>
<svg class="ar" style="left:712.60px;top:175.12px" width="8" height="8.4" viewBox="0 0 8 8.4"><path d="M0.3 0.3 L7.0 4.2 L0.3 8.1 Z" fill="#747474"/></svg>
<svg class="fi" style="left:493.15px;top:192.93px" width="17.4" height="14.4" viewBox="0 0 17.4 14.4"><g transform="scale(1.003 0.988)"><defs><linearGradient id="gb5" x1="0" y1="0" x2="0" y2="1"><stop offset="0" stop-color="#7ecffa"/><stop offset="1" stop-color="#69c3f6"/></linearGradient></defs><path d="M0 1.1 Q0 0 1.1 0 L5 0 Q5.6 0 6.1 0.7 L6.9 2 L16.3 2 Q17.4 2 17.4 3.1 L17.4 13.3 Q17.4 14.4 16.3 14.4 L1.1 14.4 Q0 14.4 0 13.3 Z" fill="#58b9f0"/><path d="M0.35 3.6 Q0.35 2.9 1.1 2.9 L16.3 2.9 Q17.05 2.9 17.05 3.6 L17.05 13.2 Q17.05 13.9 16.3 13.9 L1.1 13.9 Q0.35 13.9 0.35 13.2 Z" fill="url(#gb5)"/><rect x="0.8" y="1.5" width="4.6" height="0.9" rx="0.4" fill="#9adbfb" opacity="0.8"/></g></svg>
<div class="lbl" style="left:516.2px;top:191px;letter-spacing:0.400px;">com.apple.appstoreagent</div>
<svg class="ar" style="left:712.60px;top:195.93px" width="8" height="8.4" viewBox="0 0 8 8.4"><path d="M0.3 0.3 L7.0 4.2 L0.3 8.1 Z" fill="#747474"/></svg>
<svg class="fi" style="left:493.15px;top:213.73px" width="17.4" height="14.4" viewBox="0 0 17.4 14.4"><g transform="scale(1.003 0.988)"><defs><linearGradient id="gb6" x1="0" y1="0" x2="0" y2="1"><stop offset="0" stop-color="#7ecffa"/><stop offset="1" stop-color="#69c3f6"/></linearGradient></defs><path d="M0 1.1 Q0 0 1.1 0 L5 0 Q5.6 0 6.1 0.7 L6.9 2 L16.3 2 Q17.4 2 17.4 3.1 L17.4 13.3 Q17.4 14.4 16.3 14.4 L1.1 14.4 Q0 14.4 0 13.3 Z" fill="#58b9f0"/><path d="M0.35 3.6 Q0.35 2.9 1.1 2.9 L16.3 2.9 Q17.05 2.9 17.05 3.6 L17.05 13.2 Q17.05 13.9 16.3 13.9 L1.1 13.9 Q0.35 13.9 0.35 13.2 Z" fill="url(#gb6)"/><rect x="0.8" y="1.5" width="4.6" height="0.9" rx="0.4" fill="#9adbfb" opacity="0.8"/></g></svg>
<div class="lbl" style="left:516.2px;top:212px;letter-spacing:0.282px;">com.apple.assistant_service</div>
<svg class="ar" style="left:712.60px;top:216.73px" width="8" height="8.4" viewBox="0 0 8 8.4"><path d="M0.3 0.3 L7.0 4.2 L0.3 8.1 Z" fill="#747474"/></svg>
<svg class="fi" style="left:493.15px;top:234.53px" width="17.4" height="14.4" viewBox="0 0 17.4 14.4"><g transform="scale(1.003 0.988)"><defs><linearGradient id="gb7" x1="0" y1="0" x2="0" y2="1"><stop offset="0" stop-color="#7ecffa"/><stop offset="1" stop-color="#69c3f6"/></linearGradient></defs><path d="M0 1.1 Q0 0 1.1 0 L5 0 Q5.6 0 6.1 0.7 L6.9 2 L16.3 2 Q17.4 2 17.4 3.1 L17.4 13.3 Q17.4 14.4 16.3 14.4 L1.1 14.4 Q0 14.4 0 13.3 Z" fill="#58b9f0"/><path d="M0.35 3.6 Q0.35 2.9 1.1 2.9 L16.3 2.9 Q17.05 2.9 17.05 3.6 L17.05 13.2 Q17.05 13.9 16.3 13.9 L1.1 13.9 Q0.35 13.9 0.35 13.2 Z" fill="url(#gb7)"/><rect x="0.8" y="1.5" width="4.6" height="0.9" rx="0.4" fill="#9adbfb" opacity="0.8"/></g></svg>
<div class="lbl" style="left:516.2px;top:233px;letter-spacing:0.244px;">com.apple.cache_delete</div>
<svg class="ar" style="left:712.60px;top:237.53px" width="8" height="8.4" viewBox="0 0 8 8.4"><path d="M0.3 0.3 L7.0 4.2 L0.3 8.1 Z" fill="#747474"/></svg>
<svg class="fi" style="left:493.15px;top:255.34px" width="17.4" height="14.4" viewBox="0 0 17.4 14.4"><g transform="scale(1.003 0.988)"><defs><linearGradient id="gb8" x1="0" y1="0" x2="0" y2="1"><stop offset="0" stop-color="#7ecffa"/><stop offset="1" stop-color="#69c3f6"/></linearGradient></defs><path d="M0 1.1 Q0 0 1.1 0 L5 0 Q5.6 0 6.1 0.7 L6.9 2 L16.3 2 Q17.4 2 17.4 3.1 L17.4 13.3 Q17.4 14.4 16.3 14.4 L1.1 14.4 Q0 14.4 0 13.3 Z" fill="#58b9f0"/><path d="M0.35 3.6 Q0.35 2.9 1.1 2.9 L16.3 2.9 Q17.05 2.9 17.05 3.6 L17.05 13.2 Q17.05 13.9 16.3 13.9 L1.1 13.9 Q0.35 13.9 0.35 13.2 Z" fill="url(#gb8)"/><rect x="0.8" y="1.5" width="4.6" height="0.9" rx="0.4" fill="#9adbfb" opacity="0.8"/></g></svg>
<div class="lbl" style="left:516.2px;top:254px;letter-spacing:0.381px;">com.apple.commerce</div>
<svg class="ar" style="left:712.60px;top:258.34px" width="8" height="8.4" viewBox="0 0 8 8.4"><path d="M0.3 0.3 L7.0 4.2 L0.3 8.1 Z" fill="#747474"/></svg>
<svg class="ic" style="left:494.10px;top:275.04px" width="17.1" height="17.2" viewBox="0 0 17.1 17.2"><path d="M8.55 0 L16.6 3.4 Q17.1 3.6 17.1 4.2 V10.4 Q17.1 11 16.6 11.4 L8.55 17.2 L0.5 11.4 Q0 11 0 10.4 V4.2 Q0 3.6 0.5 3.4 Z" fill="#d6d6d6"/><circle cx="8.4" cy="8.5" r="5.4" fill="#c7c7c7" stroke="#fff" stroke-width="1.4"/><path d="M4.5 4.7 L12.3 12.4" stroke="#fff" stroke-width="1.4"/></svg>
<div class="lbl" style="left:516.2px;top:275px;letter-spacing:0.447px;">com.apple.ct<span style="letter-spacing:-0.7px;margin-right:0.8px">...</span>gories.service</div>
<svg class="fi" style="left:493.15px;top:296.95px" width="17.4" height="14.4" viewBox="0 0 17.4 14.4"><g transform="scale(1.003 0.988)"><defs><linearGradient id="gb10" x1="0" y1="0" x2="0" y2="1"><stop offset="0" stop-color="#7ecffa"/><stop offset="1" stop-color="#69c3f6"/></linearGradient></defs><path d="M0 1.1 Q0 0 1.1 0 L5 0 Q5.6 0 6.1 0.7 L6.9 2 L16.3 2 Q17.4 2 17.4 3.1 L17.4 13.3 Q17.4 14.4 16.3 14.4 L1.1 14.4 Q0 14.4 0 13.3 Z" fill="#58b9f0"/><path d="M0.35 3.6 Q0.35 2.9 1.1 2.9 L16.3 2.9 Q17.05 2.9 17.05 3.6 L17.05 13.2 Q17.05 13.9 16.3 13.9 L1.1 13.9 Q0.35 13.9 0.35 13.2 Z" fill="url(#gb10)"/><rect x="0.8" y="1.5" width="4.6" height="0.9" rx="0.4" fill="#9adbfb" opacity="0.8"/></g></svg>
<div class="lbl" style="left:516.2px;top:295px;letter-spacing:0.347px;">com.apple.Di<span style="letter-spacing:-0.7px;margin-right:0.8px">...</span>onaryServices</div>
<svg class="ar" style="left:712.60px;top:299.95px" width="8" height="8.4" viewBox="0 0 8 8.4"><path d="M0.3 0.3 L7.0 4.2 L0.3 8.1 Z" fill="#747474"/></svg>
<svg class="fi" style="left:493.15px;top:317.75px" width="17.4" height="14.4" viewBox="0 0 17.4 14.4"><g transform="scale(1.003 0.988)"><defs><linearGradient id="gb11" x1="0" y1="0" x2="0" y2="1"><stop offset="0" stop-color="#7ecffa"/><stop offset="1" stop-color="#69c3f6"/></linearGradient></defs><path d="M0 1.1 Q0 0 1.1 0 L5 0 Q5.6 0 6.1 0.7 L6.9 2 L16.3 2 Q17.4 2 17.4 3.1 L17.4 13.3 Q17.4 14.4 16.3 14.4 L1.1 14.4 Q0 14.4 0 13.3 Z" fill="#58b9f0"/><path d="M0.35 3.6 Q0.35 2.9 1.1 2.9 L16.3 2.9 Q17.05 2.9 17.05 3.6 L17.05 13.2 Q17.05 13.9 16.3 13.9 L1.1 13.9 Q0.35 13.9 0.35 13.2 Z" fill="url(#gb11)"/><rect x="0.8" y="1.5" width="4.6" height="0.9" rx="0.4" fill="#9adbfb" opacity="0.8"/></g></svg>
<div class="lbl" style="left:516.2px;top:316px;letter-spacing:0.396px;">com.apple.helpd</div>
<svg class="ar" style="left:712.60px;top:320.75px" width="8" height="8.4" viewBox="0 0 8 8.4"><path d="M0.3 0.3 L7.0 4.2 L0.3 8.1 Z" fill="#747474"/></svg>
<svg class="fi" style="left:493.15px;top:338.56px" width="17.4" height="14.4" viewBox="0 0 17.4 14.4"><g transform="scale(1.003 0.988)"><defs><linearGradient id="gb12" x1="0" y1="0" x2="0" y2="1"><stop offset="0" stop-color="#7ecffa"/><stop offset="1" stop-color="#69c3f6"/></linearGradient></defs><path d="M0 1.1 Q0 0 1.1 0 L5 0 Q5.6 0 6.1 0.7 L6.9 2 L16.3 2 Q17.4 2 17.4 3.1 L17.4 13.3 Q17.4 14.4 16.3 14.4 L1.1 14.4 Q0 14.4 0 13.3 Z" fill="#58b9f0"/><path d="M0.35 3.6 Q0.35 2.9 1.1 2.9 L16.3 2.9 Q17.05 2.9 17.05 3.6 L17.05 13.2 Q17.05 13.9 16.3 13.9 L1.1 13.9 Q0.35 13.9 0.35 13.2 Z" fill="url(#gb12)"/><rect x="0.8" y="1.5" width="4.6" height="0.9" rx="0.4" fill="#9adbfb" opacity="0.8"/></g></svg>
<div class="lbl" style="left:516.2px;top:337px;letter-spacing:0.352px;">com.apple.helpviewer</div>
<svg class="ar" style="left:712.60px;top:341.56px" width="8" height="8.4" viewBox="0 0 8 8.4"><path d="M0.3 0.3 L7.0 4.2 L0.3 8.1 Z" fill="#747474"/></svg>
<svg class="fi" style="left:493.15px;top:359.37px" width="17.4" height="14.4" viewBox="0 0 17.4 14.4"><g transform="scale(1.003 0.988)"><defs><linearGradient id="gb13" x1="0" y1="0" x2="0" y2="1"><stop offset="0" stop-color="#7ecffa"/><stop offset="1" stop-color="#69c3f6"/></linearGradient></defs><path d="M0 1.1 Q0 0 1.1 0 L5 0 Q5.6 0 6.1 0.7 L6.9 2 L16.3 2 Q17.4 2 17.4 3.1 L17.4 13.3 Q17.4 14.4 16.3 14.4 L1.1 14.4 Q0 14.4 0 13.3 Z" fill="#58b9f0"/><path d="M0.35 3.6 Q0.35 2.9 1.1 2.9 L16.3 2.9 Q17.05 2.9 17.05 3.6 L17.05 13.2 Q17.05 13.9 16.3 13.9 L1.1 13.9 Q0.35 13.9 0.35 13.2 Z" fill="url(#gb13)"/><rect x="0.8" y="1.5" width="4.6" height="0.9" rx="0.4" fill="#9adbfb" opacity="0.8"/></g></svg>
<div class="lbl" style="left:516.2px;top:358px;letter-spacing:0.462px;">com.apple.im<span style="letter-spacing:-0.7px;margin-right:0.8px">...</span>nectionAgent</div>
<svg class="ar" style="left:712.60px;top:362.37px" width="8" height="8.4" viewBox="0 0 8 8.4"><path d="M0.3 0.3 L7.0 4.2 L0.3 8.1 Z" fill="#747474"/></svg>
<svg class="fi" style="left:493.15px;top:380.17px" width="17.4" height="14.4" viewBox="0 0 17.4 14.4"><g transform="scale(1.003 0.988)"><defs><linearGradient id="gb14" x1="0" y1="0" x2="0" y2="1"><stop offset="0" stop-color="#7ecffa"/><stop offset="1" stop-color="#69c3f6"/></linearGradient></defs><path d="M0 1.1 Q0 0 1.1 0 L5 0 Q5.6 0 6.1 0.7 L6.9 2 L16.3 2 Q17.4 2 17.4 3.1 L17.4 13.3 Q17.4 14.4 16.3 14.4 L1.1 14.4 Q0 14.4 0 13.3 Z" fill="#58b9f0"/><path d="M0.35 3.6 Q0.35 2.9 1.1 2.9 L16.3 2.9 Q17.05 2.9 17.05 3.6 L17.05 13.2 Q17.05 13.9 16.3 13.9 L1.1 13.9 Q0.35 13.9 0.35 13.2 Z" fill="url(#gb14)"/><rect x="0.8" y="1.5" width="4.6" height="0.9" rx="0.4" fill="#9adbfb" opacity="0.8"/></g></svg>
<div class="lbl" style="left:516.2px;top:379px;letter-spacing:0.365px;">com.apple.installer</div>
<svg class="ar" style="left:712.60px;top:383.17px" width="8" height="8.4" viewBox="0 0 8 8.4"><path d="M0.3 0.3 L7.0 4.2 L0.3 8.1 Z" fill="#747474"/></svg>
<svg class="fi" style="left:493.15px;top:400.98px" width="17.4" height="14.4" viewBox="0 0 17.4 14.4"><g transform="scale(1.003 0.988)"><defs><linearGradient id="gb15" x1="0" y1="0" x2="0" y2="1"><stop offset="0" stop-color="#7ecffa"/><stop offset="1" stop-color="#69c3f6"/></linearGradient></defs><path d="M0 1.1 Q0 0 1.1 0 L5 0 Q5.6 0 6.1 0.7 L6.9 2 L16.3 2 Q17.4 2 17.4 3.1 L17.4 13.3 Q17.4 14.4 16.3 14.4 L1.1 14.4 Q0 14.4 0 13.3 Z" fill="#58b9f0"/><path d="M0.35 3.6 Q0.35 2.9 1.1 2.9 L16.3 2.9 Q17.05 2.9 17.05 3.6 L17.05 13.2 Q17.05 13.9 16.3 13.9 L1.1 13.9 Q0.35 13.9 0.35 13.2 Z" fill="url(#gb15)"/><rect x="0.8" y="1.5" width="4.6" height="0.9" rx="0.4" fill="#9adbfb" opacity="0.8"/></g></svg>
<div class="lbl" style="left:516.2px;top:399px;letter-spacing:0.288px;">com.apple.iTunes</div>
<svg class="ar" style="left:712.60px;top:403.98px" width="8" height="8.4" viewBox="0 0 8 8.4"><path d="M0.3 0.3 L7.0 4.2 L0.3 8.1 Z" fill="#747474"/></svg>
<svg class="fi" style="left:493.15px;top:421.78px" width="17.4" height="14.4" viewBox="0 0 17.4 14.4"><g transform="scale(1.003 0.988)"><defs><linearGradient id="gb16" x1="0" y1="0" x2="0" y2="1"><stop offset="0" stop-color="#7ecffa"/><stop offset="1" stop-color="#69c3f6"/></linearGradient></defs><path d="M0 1.1 Q0 0 1.1 0 L5 0 Q5.6 0 6.1 0.7 L6.9 2 L16.3 2 Q17.4 2 17.4 3.1 L17.4 13.3 Q17.4 14.4 16.3 14.4 L1.1 14.4 Q0 14.4 0 13.3 Z" fill="#58b9f0"/><path d="M0.35 3.6 Q0.35 2.9 1.1 2.9 L16.3 2.9 Q17.05 2.9 17.05 3.6 L17.05 13.2 Q17.05 13.9 16.3 13.9 L1.1 13.9 Q0.35 13.9 0.35 13.2 Z" fill="url(#gb16)"/><rect x="0.8" y="1.5" width="4.6" height="0.9" rx="0.4" fill="#9adbfb" opacity="0.8"/></g></svg>
<div class="lbl" style="left:516.2px;top:420px;letter-spacing:0.400px;">com.apple.nbagent</div>
<svg class="ar" style="left:712.60px;top:424.78px" width="8" height="8.4" viewBox="0 0 8 8.4"><path d="M0.3 0.3 L7.0 4.2 L0.3 8.1 Z" fill="#747474"/></svg>
<svg class="ic" style="left:495.20px;top:440.79px" width="14.2" height="18.5" viewBox="0 0 14.2 18.5"><path d="M1.5 0.55 H7.4 L13.6 6.6 V16.9 Q13.6 17.95 12.6 17.95 H1.5 Q0.5 17.95 0.5 16.9 V1.55 Q0.5 0.55 1.5 0.55 Z" fill="#fff" stroke="#dadada" stroke-width="1"/><path d="M7.4 0.8 V5.3 Q7.4 6.5 8.6 6.5 H13.3" fill="#f4f4f4" stroke="#dcdcdc" stroke-width="0.9"/></svg>
<div class="lbl" style="left:516.2px;top:441px;letter-spacing:0.396px;">com.apple.ns<span style="letter-spacing:-0.7px;margin-right:0.8px">...</span>escache.plist</div>
<svg class="fi" style="left:493.15px;top:463.39px" width="17.4" height="14.4" viewBox="0 0 17.4 14.4"><g transform="scale(1.003 0.988)"><defs><linearGradient id="gb18" x1="0" y1="0" x2="0" y2="1"><stop offset="0" stop-color="#7ecffa"/><stop offset="1" stop-color="#69c3f6"/></linearGradient></defs><path d="M0 1.1 Q0 0 1.1 0 L5 0 Q5.6 0 6.1 0.7 L6.9 2 L16.3 2 Q17.4 2 17.4 3.1 L17.4 13.3 Q17.4 14.4 16.3 14.4 L1.1 14.4 Q0 14.4 0 13.3 Z" fill="#58b9f0"/><path d="M0.35 3.6 Q0.35 2.9 1.1 2.9 L16.3 2.9 Q17.05 2.9 17.05 3.6 L17.05 13.2 Q17.05 13.9 16.3 13.9 L1.1 13.9 Q0.35 13.9 0.35 13.2 Z" fill="url(#gb18)"/><rect x="0.8" y="1.5" width="4.6" height="0.9" rx="0.4" fill="#9adbfb" opacity="0.8"/></g></svg>
<div class="lbl" style="left:516.2px;top:462px;letter-spacing:0.341px;">com.apple.nsurlsessiond</div>
<svg class="ar" style="left:712.60px;top:466.39px" width="8" height="8.4" viewBox="0 0 8 8.4"><path d="M0.3 0.3 L7.0 4.2 L0.3 8.1 Z" fill="#747474"/></svg>
<svg class="fi" style="left:493.15px;top:484.20px" width="17.4" height="14.4" viewBox="0 0 17.4 14.4"><g transform="scale(1.003 0.988)"><defs><linearGradient id="gb19" x1="0" y1="0" x2="0" y2="1"><stop offset="0" stop-color="#7ecffa"/><stop offset="1" stop-color="#69c3f6"/></linearGradient></defs><path d="M0 1.1 Q0 0 1.1 0 L5 0 Q5.6 0 6.1 0.7 L6.9 2 L16.3 2 Q17.4 2 17.4 3.1 L17.4 13.3 Q17.4 14.4 16.3 14.4 L1.1 14.4 Q0 14.4 0 13.3 Z" fill="#58b9f0"/><path d="M0.35 3.6 Q0.35 2.9 1.1 2.9 L16.3 2.9 Q17.05 2.9 17.05 3.6 L17.05 13.2 Q17.05 13.9 16.3 13.9 L1.1 13.9 Q0.35 13.9 0.35 13.2 Z" fill="url(#gb19)"/><rect x="0.8" y="1.5" width="4.6" height="0.9" rx="0.4" fill="#9adbfb" opacity="0.8"/></g></svg>
<div class="lbl" style="left:516.2px;top:483px;letter-spacing:0.394px;">com.apple.parsecd</div>
<svg class="ar" style="left:712.60px;top:487.20px" width="8" height="8.4" viewBox="0 0 8 8.4"><path d="M0.3 0.3 L7.0 4.2 L0.3 8.1 Z" fill="#747474"/></svg>
</div></div></body></html>
